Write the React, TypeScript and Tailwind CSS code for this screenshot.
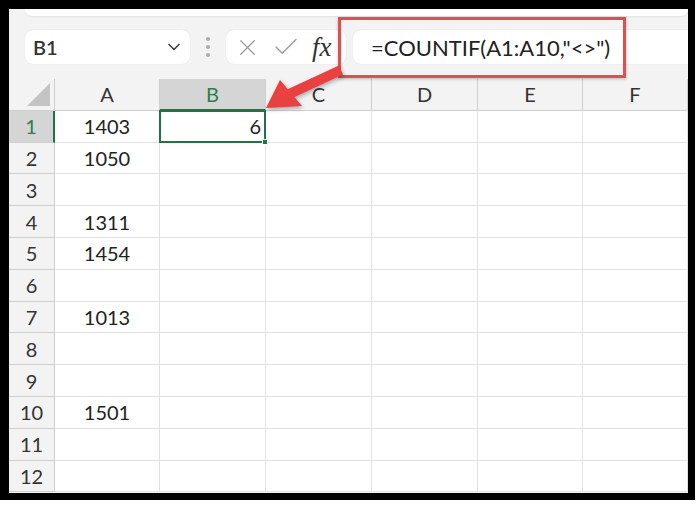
import { ChevronDown, X, Check } from "lucide-react";

const cols = ["A", "B", "C", "D", "E", "F"];
const values: Record<number, string> = { 1: "1403", 2: "1050", 4: "1311", 5: "1454", 7: "1013", 10: "1501" };
const rows = Array.from({ length: 12 }, (_, i) => i + 1);

export default function App() {
  return (
    <div className="relative w-[700px] h-[506px] bg-white overflow-hidden" style={{ fontFamily: "Lato, 'Open Sans', sans-serif" }}>
      <div className="w-[695px] h-[500px] border-l-[9px] border-t-[9px] border-r-[7px] border-b-[7px] border-black bg-[#f3f3f3] flex flex-col overflow-hidden">
        {/* TOOLBAR */}
        <div className="h-[70px] shrink-0 flex flex-col">
          <div className="ml-[16px] h-[7px] bg-white rounded-b-[8px] shadow-[0_1px_2px_rgba(0,0,0,0.08)]" />
          <div className="flex items-center mt-[14px] h-[34px]">
            <div className="ml-[16px] w-[165px] h-[34px] bg-white rounded-[8px] flex items-center justify-between pl-[8px] pr-[6px] shadow-[0_0_1px_rgba(0,0,0,0.15)]">
              <span className="text-[20px] font-semibold text-[#333]">B1</span>
              <ChevronDown size={20} strokeWidth={2} className="text-[#444]" />
            </div>
            <div className="w-[36px] flex flex-col items-center gap-[4px]">
              <span className="w-[4px] h-[4px] rounded-full bg-[#aaa]" />
              <span className="w-[4px] h-[4px] rounded-full bg-[#aaa]" />
              <span className="w-[4px] h-[4px] rounded-full bg-[#aaa]" />
            </div>
            <div className="w-[120px] h-[34px] bg-white rounded-[8px] flex items-center pl-[8px] gap-[10px] shadow-[0_0_1px_rgba(0,0,0,0.15)]">
              <X size={27} strokeWidth={1.1} className="text-[#9a9a9a]" />
              <Check size={30} strokeWidth={1.1} className="text-[#9a9a9a]" />
              <span className="text-[27px] italic text-[#333] ml-[1px] leading-none" style={{ fontFamily: "'Liberation Serif', serif" }}>fx</span>
            </div>
            <div className="ml-[7px] flex-1 h-[34px] bg-white rounded-l-[8px] flex items-center pl-[18px] shadow-[0_0_1px_rgba(0,0,0,0.15)]">
              <span className="text-[22px] text-[#222]">=COUNTIF(A1:A10,"&lt;&gt;")</span>
            </div>
          </div>
        </div>

        {/* GRID */}
        <div className="grid grid-cols-[46px_105px_106px_106px_106px_105px_105px] auto-rows-[31.8px] bg-white text-[20px]">
          <div className="relative bg-[#f3f3f3] border-r border-b border-[#cfcfcf]">
            <svg className="absolute right-[4px] bottom-[4px]" width="23" height="23" viewBox="0 0 23 23">
              <polygon points="23,0 23,23 0,23" fill="#c4c4c4" />
            </svg>
          </div>
          {cols.map((c) => (
            <div
              key={c}
              className={
                c === "B"
                  ? "bg-[#d5d5d5] text-[#2e7d4f] border-r border-[#cfcfcf] border-b-2 border-b-[#217346] flex items-center justify-center"
                  : "bg-[#f3f3f3] text-[#333] border-r border-b border-[#cfcfcf] flex items-center justify-center"
              }
            >
              {c}
            </div>
          ))}
          {rows.map((r) => (
            <>
              <div
                key={"h" + r}
                className={
                  r === 1
                    ? "bg-[#d5d5d5] text-[#2e7d4f] border-r-2 border-r-[#217346] border-b border-[#cfcfcf] flex items-center justify-center"
                    : "bg-[#f3f3f3] text-[#333] border-r border-b border-[#cfcfcf] flex items-center justify-center"
                }
              >
                {r}
              </div>
              {cols.map((c) => (
                <div
                  key={c + r}
                  className={
                    c === "B" && r === 1
                      ? "relative border-2 border-[#217346] flex items-center justify-end pr-[3px] text-[#222] -ml-px -mt-px"
                      : "border-r border-b border-[#e2e2e2] flex items-center justify-center text-[#222]"
                  }
                >
                  {c === "A" && values[r]}
                  {c === "B" && r === 1 && (
                    <>
                      6
                      <span className="absolute -right-[4px] -bottom-[4px] w-[6px] h-[6px] bg-[#217346] border border-white" />
                    </>
                  )}
                </div>
              ))}
            </>
          ))}
        </div>
      </div>

      {/* RED HIGHLIGHT BOX */}
      <div className="absolute left-[338px] top-[17px] w-[288px] h-[61px] border-[3px] border-[#e24d4d] shadow-[0_1px_3px_rgba(0,0,0,0.25)]" />

      {/* ARROW */}
      <svg className="absolute left-0 top-0 pointer-events-none" width="700" height="506" style={{ filter: "drop-shadow(1px 2px 2px rgba(0,0,0,0.3))" }}>
        <line x1="341" y1="70" x2="287" y2="95" stroke="#e8413f" strokeWidth="10" />
        <polygon points="266,108 280,80 302,106" fill="#e8413f" />
      </svg>
    </div>
  );
}
